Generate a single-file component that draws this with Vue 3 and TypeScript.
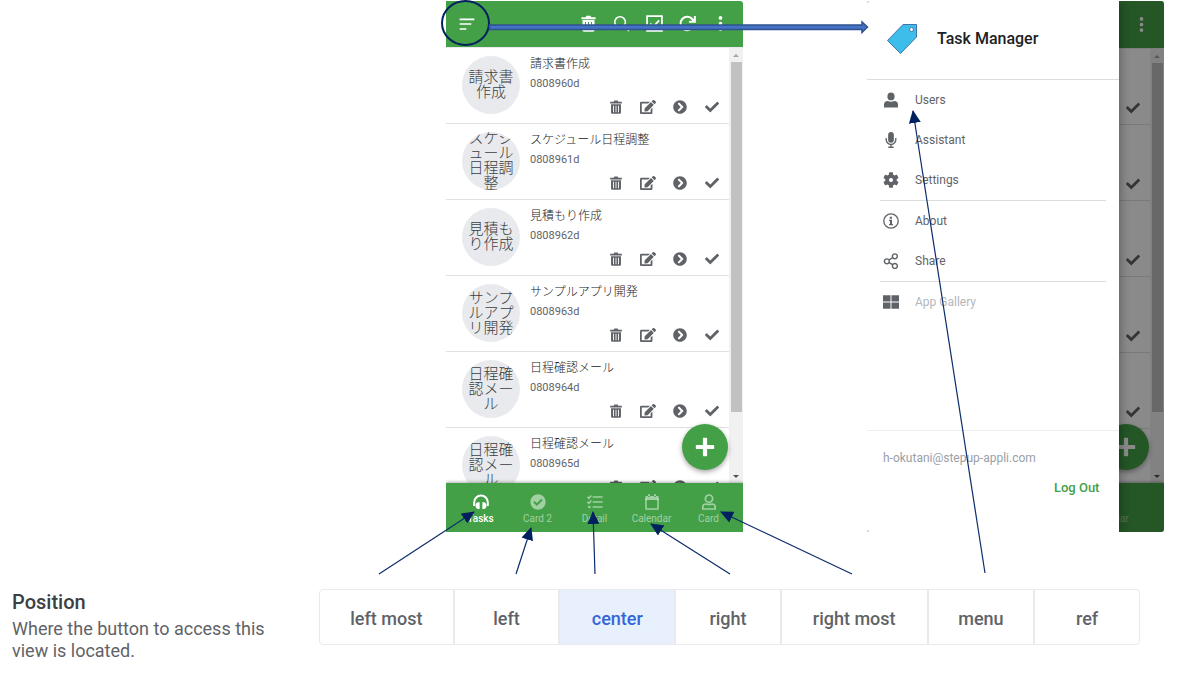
<script setup lang="ts">
import { h, ref } from 'vue'

interface Glyph {
  box: string
  fill?: string
  line?: string
  weight?: number
}

const glyphs: Record<string, Glyph> = {
  menu: { box: '0 0 24 24', line: 'M1 5H23M1 12H18.500M1 19.500H11', weight: 2.6 },
  trash: {
    box: '0 0 24 24',
    fill: 'M2 3.200H8L9.200 1H14.800L16 3.200H22V6H2ZM3.500 7.200H20.500V21.500Q20.500 23.500 18.500 23.500H5.500Q3.500 23.500 3.500 21.500ZM7 10V20.800H8.500V10ZM11.250 10V20.800H12.750V10ZM15.500 10V20.800H17V10Z',
  },
  search: { box: '0 0 24 24', line: 'M17.500 10A7.500 7.500 0 1 1 2.500 10A7.500 7.500 0 1 1 17.500 10ZM15.600 15.600L22.500 22.500', weight: 2.2 },
  checkbox: { box: '0 0 24 24', line: 'M1.500 1.500H22.500V22.500H1.500ZM6 12L10.500 16.500L18.500 7.500', weight: 2.4 },
  refresh: { box: '0 0 24 24', line: 'M20.500 15.500A9.500 9.500 0 1 1 19.500 6.500L21.500 9M22.400 1.500V9.600H14', weight: 2.8 },
  dots: { box: '0 0 24 24', fill: 'M12 1.500a2.600 2.600 0 1 1 0 5.200a2.600 2.600 0 1 1 0-5.200ZM12 9.400a2.600 2.600 0 1 1 0 5.200a2.600 2.600 0 1 1 0-5.200ZM12 17.300a2.600 2.600 0 1 1 0 5.200a2.600 2.600 0 1 1 0-5.200Z' },
  edit: {
    box: '0 0 576 512',
    fill: 'M402.6 83.2l90.2 90.2c3.8 3.8 3.8 10 0 13.8L274.4 405.6l-92.8 10.3c-12.4 1.4-22.9-9.1-21.5-21.5l10.3-92.8L388.8 83.2c3.8-3.8 10-3.8 13.8 0zm162-22.9l-48.8-48.8c-15.2-15.2-39.900-15.2-55.2 0l-35.4 35.4c-3.8 3.8-3.8 10 0 13.8l90.2 90.2c3.8 3.8 10 3.8 13.8 0l35.4-35.4c15.2-15.3 15.2-40 0-55.2zM384 346.2V448H64V128h229.8c3.2 0 6.2-1.3 8.5-3.5l40-40c7.6-7.6 2.2-20.5-8.5-20.5H48C21.5 64 0 85.5 0 112v352c0 26.5 21.5 48 48 48h352c26.5 0 48-21.5 48-48V306.2c0-10.7-12.9-16-20.5-8.5l-40 40c-2.2 2.3-3.5 5.3-3.5 8.5z',
  },
  next: {
    box: '0 0 512 512',
    fill: 'M256 8c137 0 248 111 248 248S393 504 256 504 8 393 8 256 119 8 256 8zm113.9 231L234.4 103.5c-9.4-9.4-24.6-9.4-33.900 0l-17 17c-9.4 9.4-9.4 24.6 0 33.9L285.1 256 183.5 357.6c-9.4 9.4-9.4 24.6 0 33.9l17 17c9.4 9.4 24.6 9.4 33.9 0L369.9 273c9.4-9.4 9.4-24.6 0-34z',
  },
  check: {
    box: '0 0 512 512',
    fill: 'M173.898 439.404l-166.4-166.4c-9.997-9.997-9.997-26.206 0-36.204l36.203-36.204c9.997-9.998 26.207-9.998 36.204 0L192 312.69 432.095 72.596c9.997-9.997 26.207-9.997 36.204 0l36.203 36.204c9.997 9.997 9.997 26.206 0 36.204l-294.4 294.401c-9.998 9.997-26.207 9.997-36.204-.001z',
  },
  plus: { box: '0 0 24 24', fill: 'M10.500 2H13.500Q14.300 2 14.300 2.800V9.700H21.200Q22 9.700 22 10.500V13.500Q22 14.300 21.200 14.300H14.300V21.200Q14.300 22 13.500 22H10.500Q9.700 22 9.700 21.200V14.300H2.800Q2 14.300 2 13.500V10.500Q2 9.700 2.800 9.700H9.700V2.800Q9.700 2 10.500 2Z' },
  headphones: {
    box: '0 0 24 24',
    fill: 'M10 12.500V22.500H8Q3.800 22 3.800 17.500T8 12.500ZM14 12.500V22.500H16Q20.200 22 20.200 17.500T16 12.500Z',
    line: 'M1.800 18V12.500A10.200 10.200 0 0 1 22.200 12.500V18',
    weight: 3,
  },
  checkCircle: {
    box: '0 0 24 24',
    fill: 'M12 .500A11.500 11.500 0 1 1 12 23.500A11.500 11.500 0 1 1 12 .500ZM10.300 17.900L19 9.200L17 7.200L10.300 13.900L7 10.600L5 12.600Z',
  },
  tasks: {
    box: '0 0 24 24',
    fill: 'M1.500 19.500a2 2 0 1 1 4 0a2 2 0 1 1-4 0Z',
    line: 'M8.500 4.500H23.500M8.500 12H23.500M8.500 19.500H23.500M.700 4.300L2.800 6.400L6.500 2.200M.700 11.800L2.800 13.900L6.500 9.700',
    weight: 2.4,
  },
  calendar: {
    box: '0 0 24 24',
    fill: 'M6 .500H9V4H6ZM15 .500H18V4H15ZM2 4Q2 3 3 3H21Q22 3 22 4V9H2Z',
    line: 'M3 7V22.400H21V7',
    weight: 2.4,
  },
  person: {
    box: '0 0 24 24',
    line: 'M17.500 7A5.500 5.500 0 1 1 6.500 7A5.500 5.500 0 1 1 17.500 7ZM2.700 22.500V19.500Q2.700 15 7.500 15Q12 16.600 16.500 15Q21.300 15 21.300 19.500V22.500Z',
    weight: 2.6,
  },
  user: { box: '0 0 24 24', fill: 'M12 .800a5.400 5.800 0 1 1 0 11.600a5.400 5.800 0 1 1 0-11.600ZM1.500 23.200V18.500Q1.800 13.800 7 13.500Q12 16 17 13.500Q22.200 13.800 22.500 18.500V23.200Z' },
  mic: {
    box: '0 0 24 24',
    fill: 'M12 0Q16.300 .300 16.300 4.500V11.500Q16.300 15.800 12 16T7.700 11.500V4.500Q7.700 .300 12 0ZM8 21.700H16V24H8Z',
    line: 'M4.800 9V11.500A7.200 7.200 0 0 0 19.200 11.500V9M12 18.500V23',
    weight: 2,
  },
  gear: {
    box: '2 2 20 20',
    fill: 'M19.140 12.940c.04-.3.06-.61.06-.94 0-.32-.02-.64-.07-.94l2.030-1.580c.18-.14.23-.41.12-.61l-1.920-3.320c-.12-.22-.37-.29-.59-.22l-2.390.96c-.5-.38-1.030-.7-1.620-.94l-.36-2.540c-.04-.24-.24-.41-.48-.41h-3.840c-.24 0-.43.17-.47.41l-.36 2.540c-.59.24-1.130.57-1.620.94l-2.390-.96c-.22-.08-.47 0-.59.22L2.740 8.870c-.12.21-.08.47.12.61l2.030 1.580c-.05.3-.09.63-.09.94s.02.64.07.94l-2.030 1.580c-.18.14-.23.41-.12.61l1.920 3.320c.12.22.37.29.59.22l2.390-.96c.5.38 1.030.7 1.620.94l.36 2.540c.05.24.24.41.48.41h3.840c.24 0 .44-.17.47-.41l.36-2.540c.59-.24 1.130-.56 1.620-.94l2.390.96c.22.08.47 0 .59-.22l1.920-3.320c.12-.22.07-.47-.12-.61l-2.010-1.580zM12 14.600a2.600 2.600 0 1 1 0-5.200a2.600 2.600 0 1 1 0 5.200z',
  },
  info: {
    box: '0 0 24 24',
    fill: 'M10.200 5.500H13.400V8.500H10.200ZM9 10H13.500V16.500H15V18.500H9V16.500H10.500V12H9Z',
    line: 'M12 1.200A10.800 10.800 0 1 1 12 22.800A10.800 10.800 0 1 1 12 1.200Z',
    weight: 2,
  },
  share: {
    box: '0 0 24 24',
    line: 'M9.500 12.500A3.700 3.700 0 1 1 2.100 12.500A3.700 3.700 0 1 1 9.500 12.500ZM21.500 5A3.700 3.700 0 1 1 14.100 5A3.700 3.700 0 1 1 21.500 5ZM21.500 19.500A3.700 3.700 0 1 1 14.100 19.500A3.700 3.700 0 1 1 21.500 19.500ZM9 10.500L14.500 7M9 14.500L14.500 17.600',
    weight: 2.2,
  },
  gallery: { box: '0 0 24 24', fill: 'M0 2H11.300V11.300H0ZM12.700 2H24V11.300H12.700ZM0 12.700H11.300V22H0ZM12.700 12.700H24V22H12.700Z' },
}

const Icon = (props: { name: string }) => {
  const g = glyphs[props.name]
  return h('svg', { viewBox: g.box, 'aria-hidden': 'true' }, [
    g.fill ? h('path', { d: g.fill, fill: 'currentColor', 'fill-rule': 'evenodd' }) : null,
    g.line ? h('path', { d: g.line, fill: 'none', stroke: 'currentColor', 'stroke-width': g.weight }) : null,
  ])
}
Icon.props = ['name']

const tabs = [
  { icon: 'headphones', label: 'Tasks' },
  { icon: 'checkCircle', label: 'Card 2' },
  { icon: 'tasks', label: 'Detail' },
  { icon: 'calendar', label: 'Calendar' },
  { icon: 'person', label: 'Card' },
]

const phones = [
  { id: 'list', drawer: false, tabs },
  { id: 'menu', drawer: true, tabs: tabs.slice(0, 4) },
]

const tasks = [
  { title: '請求書作成', code: '0808960d' },
  { title: 'スケジュール日程調整', code: '0808961d' },
  { title: '見積もり作成', code: '0808962d' },
  { title: 'サンプルアプリ開発', code: '0808963d' },
  { title: '日程確認メール', code: '0808964d' },
  { title: '日程確認メール', code: '0808965d' },
]

const tools = [
  { icon: 'trash', label: 'Delete' },
  { icon: 'search', label: 'Search' },
  { icon: 'checkbox', label: 'Select' },
  { icon: 'refresh', label: 'Sync' },
  { icon: 'dots', label: 'More' },
]

const actions = [
  { icon: 'trash', label: 'Delete' },
  { icon: 'edit', label: 'Edit' },
  { icon: 'next', label: 'Open' },
  { icon: 'check', label: 'Done' },
]

const menuGroups = [
  [
    { icon: 'user', label: 'Users' },
    { icon: 'mic', label: 'Assistant' },
    { icon: 'gear', label: 'Settings' },
  ],
  [
    { icon: 'info', label: 'About' },
    { icon: 'share', label: 'Share' },
  ],
  [{ icon: 'gallery', label: 'App Gallery', muted: true }],
] as { icon: string; label: string; muted?: boolean }[][]

const positions = ['left most', 'left', 'center', 'right', 'right most', 'menu', 'ref']
const selected = ref('center')

const arrows = [
  [379, 574, 474, 512],
  [516, 574, 531, 528],
  [595, 574, 593, 512],
  [730, 574, 651, 524],
  [852, 574, 721, 512],
  [985, 573, 913, 111],
]
</script>

<template>
  <main class="board">
    <div class="phones">
      <section v-for="p in phones" :key="p.id" class="phone" :class="p.id">
        <header class="bar">
          <button class="tool" type="button" aria-label="Menu"><Icon name="menu" class="i16" /></button>
          <div class="tools">
            <button v-for="t in tools" :key="t.icon" class="tool" type="button" :aria-label="t.label">
              <Icon :name="t.icon" class="i17" />
            </button>
          </div>
        </header>
        <div class="body">
          <ul class="tasks">
            <li v-for="t in tasks" :key="t.code" class="task">
              <div class="avatar"><span>{{ t.title }}</span></div>
              <div class="info">
                <div class="title">{{ t.title }}</div>
                <div class="code">{{ t.code }}</div>
                <div class="actions">
                  <button v-for="a in actions" :key="a.icon" type="button" :aria-label="a.label">
                    <Icon :name="a.icon" :class="a.icon === 'edit' ? 'i16' : 'i14'" />
                  </button>
                </div>
              </div>
            </li>
          </ul>
          <div class="scroll">
            <span class="up"></span>
            <div class="track"><div class="thumb"></div></div>
            <span class="down"></span>
          </div>
        </div>
        <nav class="tabs">
          <button v-for="(t, i) in p.tabs" :key="t.label" type="button" :class="{ on: i === 0 }">
            <Icon :name="t.icon" class="i16" />
            <span>{{ t.label }}</span>
          </button>
        </nav>
        <button class="fab" type="button" aria-label="Add"><Icon name="plus" class="i22" /></button>

        <div v-if="p.drawer" class="scrim">
          <aside class="drawer">
            <div class="brand">
              <svg class="tag" viewBox="0 0 32 32" aria-hidden="true">
                <path d="M1.500 17.500L17 1.500H30.500V14L14.500 30.500Z" fill="#3dbde9" stroke="#3f75a8" stroke-linejoin="round" />
                <circle cx="25.500" cy="6.500" r="2" fill="#fff" stroke="#3f75a8" />
              </svg>
              <h1>Task Manager</h1>
            </div>
            <ul v-for="(g, i) in menuGroups" :key="i" class="group">
              <li v-for="m in g" :key="m.label">
                <a href="#" :class="{ muted: m.muted }"><Icon :name="m.icon" class="i16" /><span>{{ m.label }}</span></a>
              </li>
            </ul>
            <div class="account">
              <div class="mail">h-okutani@stepup-appli.com</div>
              <button type="button" class="logout">Log Out</button>
            </div>
          </aside>
        </div>
      </section>
    </div>

    <section class="setting">
      <div class="label">
        <h2 id="position">Position</h2>
        <p>Where the button to access this view is located.</p>
      </div>
      <div class="segments" role="group" aria-labelledby="position">
        <button
          v-for="s in positions"
          :key="s"
          type="button"
          :aria-pressed="s === selected"
          :class="{ picked: s === selected }"
          @click="selected = s"
        >{{ s }}</button>
      </div>
    </section>

    <svg class="notes" viewBox="0 0 1189 677" preserveAspectRatio="none" aria-hidden="true">
      <defs>
        <marker id="head" markerUnits="userSpaceOnUse" markerWidth="13" markerHeight="12" refX="12" refY="6" orient="auto">
          <path d="M0 0L13 6L0 12Z" fill="#002060" />
        </marker>
      </defs>
      <ellipse cx="465.500" cy="23" rx="23.500" ry="22" fill="none" stroke="#002060" stroke-width="2" />
      <path d="M489.500 25H862V22L867.500 27L862 32.500V29.500H489.500Z" fill="#4472c4" stroke="#2f528f" stroke-width="1.500" />
      <line
        v-for="(a, i) in arrows"
        :key="i"
        :x1="a[0]"
        :y1="a[1]"
        :x2="a[2]"
        :y2="a[3]"
        stroke="#0c2c6c"
        stroke-width="1.200"
        marker-end="url(#head)"
      />
    </svg>
  </main>
</template>

<style>
body {
  margin: 0;
  background: #fff;
}
</style>

<style scoped>
.board {
  position: relative;
  box-sizing: border-box;
  padding: 1px 0 16px;
  overflow: hidden;
  font-family: Roboto, "Noto Sans CJK JP", sans-serif;
  color: #3c4043;
}
.board * {
  box-sizing: border-box;
}
button {
  padding: 0;
  border: 0;
  background: none;
  color: inherit;
  font: inherit;
  cursor: pointer;
}
ul {
  margin: 0;
  padding: 0;
  list-style: none;
}
svg {
  display: block;
}
.i14 {
  width: 14px;
  height: 14px;
}
.i16 {
  width: 16px;
  height: 16px;
}
.i17 {
  width: 17px;
  height: 17px;
}
.i22 {
  width: 22px;
  height: 22px;
}
.phones {
  display: grid;
  grid-template-columns: 446fr 297fr 124fr 297fr 25fr;
}
.phone {
  position: relative;
  display: flex;
  flex-direction: column;
  grid-column: 2;
  height: 531px;
  overflow: hidden;
  border-radius: 0 3px 0 0;
}
.phone.menu {
  grid-column: 4;
  border-radius: 3px;
}
.bar {
  display: flex;
  justify-content: space-between;
  align-items: center;
  flex: none;
  height: 46px;
  padding: 0 6px 1px 4px;
  background: #43a047;
  color: #fff;
}
.menu .bar {
  height: 47px;
}
.tools {
  display: flex;
}
.tool {
  display: grid;
  place-items: center;
  width: 33px;
  height: 40px;
}
.body {
  display: flex;
  flex: 1;
  min-height: 0;
  border-top: 1px solid #e8eaed;
}
.tasks {
  flex: 1;
  overflow: hidden;
}
.task {
  display: flex;
  gap: 10px;
  height: 76px;
  padding: 8px 1px 0 16px;
  border-bottom: 1px solid #e0e0e0;
}
.avatar {
  display: grid;
  place-content: center;
  flex: none;
  width: 58px;
  height: 58px;
  overflow: hidden;
  border-radius: 50%;
  background: #e8eaed;
  font-size: 15px;
  font-weight: 300;
  line-height: 15px;
  text-align: center;
}
.avatar span {
  width: 46px;
}
.info {
  flex: 1;
}
.title {
  font-size: 12px;
  font-weight: 300;
  line-height: 16px;
  color: #202124;
}
.code {
  margin-top: 4px;
  font-size: 11px;
  line-height: 16px;
  color: #5f6368;
}
.actions {
  display: flex;
  justify-content: flex-end;
  margin-top: 5px;
  color: #5f6368;
}
.actions button {
  display: grid;
  place-items: center;
  width: 32px;
  height: 20px;
}
.scroll {
  display: flex;
  flex-direction: column;
  align-items: center;
  width: 14px;
  background: #f1f1f1;
}
.up,
.down {
  width: 6px;
  height: 3px;
  margin: 6px 0 5px;
  background: #a3a3a3;
  clip-path: polygon(50% 0, 100% 100%, 0 100%);
}
.down {
  background: #505050;
  clip-path: polygon(0 0, 100% 0, 50% 100%);
}
.track {
  flex: 1;
  width: 11px;
}
.thumb {
  height: 86%;
  background: #c1c1c1;
}
.tabs {
  display: grid;
  grid-template-columns: repeat(5, 1fr);
  flex: none;
  height: 49px;
  padding: 0 6px;
  background: #43a047;
  box-shadow: 0 -1px 3px rgba(0, 0, 0, 0.3);
  color: rgba(255, 255, 255, 0.5);
  z-index: 1;
}
.menu .tabs {
  grid-template-columns: repeat(4, 1fr);
  padding: 0 24px;
}
.tabs button {
  display: flex;
  flex-direction: column;
  align-items: center;
  gap: 2px;
  padding-top: 11px;
  font-size: 10px;
  line-height: 13px;
}
.tabs .on {
  color: #fff;
  font-weight: 500;
}
.fab {
  position: absolute;
  right: 15px;
  bottom: 62px;
  display: grid;
  place-items: center;
  width: 46px;
  height: 46px;
  border-radius: 50%;
  background: #43a047;
  box-shadow: 0 2px 5px rgba(0, 0, 0, 0.35);
  color: #fff;
}
.scrim {
  position: absolute;
  inset: 0;
  z-index: 2;
  background: rgba(0, 0, 0, 0.46);
}
.drawer {
  display: flex;
  flex-direction: column;
  width: 85%;
  height: 100%;
  background: #fff;
  box-shadow: 0 0 10px rgba(0, 0, 0, 0.4);
}
.brand {
  display: flex;
  align-items: center;
  gap: 19px;
  height: 79px;
  padding: 0 19px 2px;
  border-bottom: 1px solid #dadce0;
}
.tag {
  width: 32px;
  height: 32px;
}
h1 {
  margin: 0;
  font-size: 16px;
  font-weight: 500;
  line-height: 24px;
  color: #202124;
}
.group {
  margin: 0 13px;
}
.group + .group {
  border-top: 1px solid #dadce0;
}
.group a {
  display: flex;
  align-items: center;
  gap: 16px;
  height: 40px;
  padding-left: 3px;
  color: #5f6368;
  font-size: 12px;
  line-height: 16px;
  text-decoration: none;
}
.muted span {
  color: #b4b6b9;
}
.account {
  display: flex;
  flex-direction: column;
  height: 102px;
  margin-top: auto;
  padding: 19px 20px 0 16px;
  border-top: 1px solid #eceef0;
}
.mail {
  font-size: 12px;
  line-height: 16px;
  color: #9aa0a6;
}
.logout {
  align-self: flex-end;
  margin-top: 13px;
  font-size: 13px;
  font-weight: 500;
  line-height: 18px;
  color: #43a047;
}
.setting {
  display: grid;
  grid-template-columns: 307fr 821fr 49fr;
  align-items: start;
  padding: 57px 0 0 12px;
}
h2 {
  margin: 0;
  font-size: 20px;
  font-weight: 500;
  line-height: 26px;
}
p {
  max-width: 270px;
  margin: 3px 0 0;
  font-size: 18px;
  line-height: 22px;
  color: #5f6368;
}
.segments {
  display: grid;
  grid-template-columns: 133fr 106fr 116fr 106fr 147fr 107fr 106fr;
  border: 1px solid #e8eaed;
  border-radius: 4px;
  overflow: hidden;
}
.segments button {
  height: 54px;
  padding-top: 2px;
  font-size: 18px;
  font-weight: 500;
  color: #5f6368;
  white-space: nowrap;
}
.segments button + button {
  border-left: 2px solid #e8eaed;
}
.segments .picked {
  background: #e8f0fe;
  color: #3367d6;
}
.notes {
  position: absolute;
  top: 0;
  left: 0;
  z-index: 3;
  width: 100%;
  height: 677px;
  pointer-events: none;
}
</style>
